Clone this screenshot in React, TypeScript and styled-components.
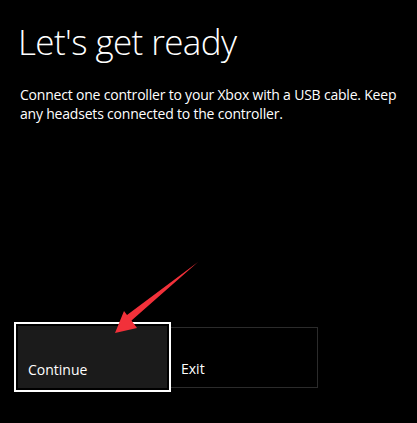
import React from 'react';
import styled, { createGlobalStyle } from 'styled-components';

const GlobalStyle = createGlobalStyle`
  html, body {
    margin: 0;
    padding: 0;
    background: #000;
  }
  #root {
    width: 417px;
    height: 423px;
  }
`;

const Screen = styled.div`
  position: relative;
  box-sizing: border-box;
  width: 417px;
  height: 423px;
  background: #000;
  color: #fff;
  font-family: 'Open Sans', 'Noto Sans', sans-serif;
  display: flex;
  flex-direction: column;
  padding: 18px 4px 0 18px;
`;

const Title = styled.h1`
  margin: 0;
  font-size: 35px;
  font-weight: 300;
  line-height: 48px;
  letter-spacing: -0.6px;
`;

const Body = styled.p`
  margin: 19px 0 0 2px;
  font-size: 14px;
  line-height: 19px;
  font-weight: 400;
  letter-spacing: -0.2px;
  max-width: 392px;
`;

const Actions = styled.div`
  display: flex;
  align-items: center;
  margin-top: auto;
  margin-bottom: 31px;
  margin-left: -4px;
`;

const FocusRing = styled.div`
  box-sizing: border-box;
  width: 157px;
  height: 70px;
  border: 2px solid #fff;
  padding: 2px;
  background: #000;
`;

const Tile = styled.button<{ $filled?: boolean }>`
  box-sizing: border-box;
  display: flex;
  align-items: flex-end;
  width: ${p => (p.$filled ? '100%' : '147px')};
  height: ${p => (p.$filled ? '100%' : '61px')};
  margin: 0;
  padding: 0 0 9px 10px;
  background: ${p => (p.$filled ? '#1b1b1b' : '#000')};
  border: ${p => (p.$filled ? 'none' : '1px solid #2b2b2b')};
  border-left: none;
  color: #fff;
  font-family: inherit;
  font-size: 14px;
  line-height: 18px;
  text-align: left;
  cursor: pointer;
`;

const Pointer = styled.svg`
  position: absolute;
  left: 0;
  top: 0;
  pointer-events: none;
`;

export default function App() {
  return (
    <>
      <GlobalStyle />
      <Screen>
        <Title>Let's get ready</Title>
        <Body>
          Connect one controller to your Xbox with a USB cable. Keep any headsets
          connected to the controller.
        </Body>
        <Actions>
          <FocusRing>
            <Tile $filled>Continue</Tile>
          </FocusRing>
          <Tile>Exit</Tile>
        </Actions>
        {/* red callout arrow pointing at the focused tile */}
        <Pointer width="417" height="423" viewBox="0 0 417 423">
          <polygon
            points="198,262 131.5,320.5 137,328 115,333 124,311 127,315"
            fill="#f2313a"
          />
        </Pointer>
      </Screen>
    </>
  );
}
